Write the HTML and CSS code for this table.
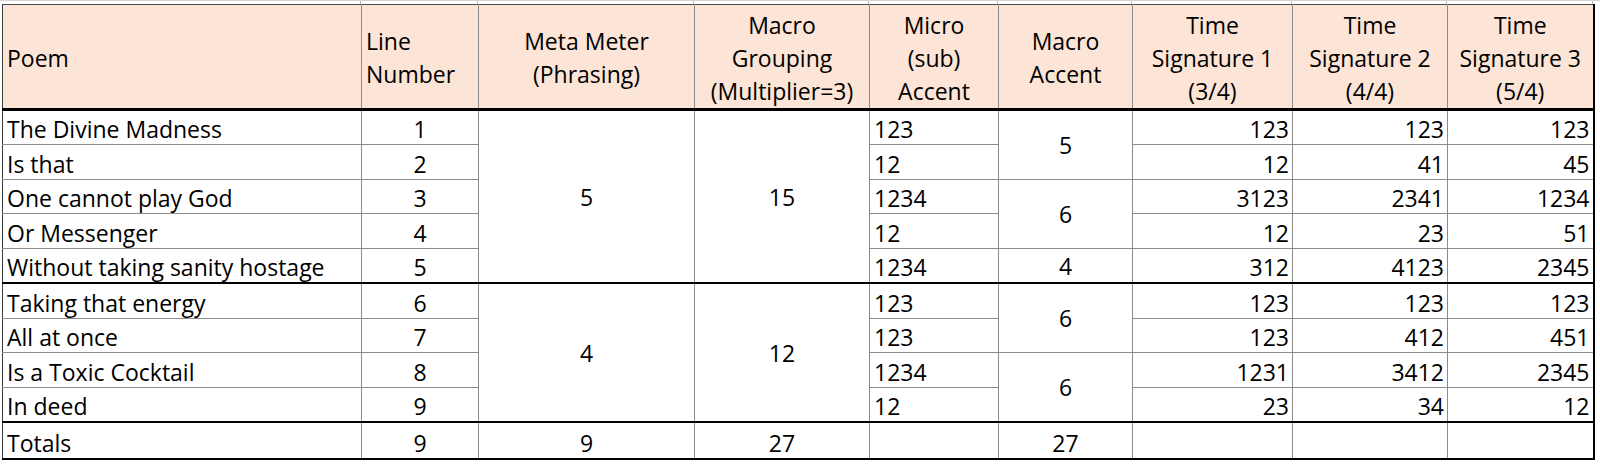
FILE: index.html
```html
<!DOCTYPE html>
<html lang="en">
<head>
<meta charset="utf-8">
<title>Poem meter table</title>
<link rel="stylesheet" href="styles.css">
</head>
<body>
<div class="sheet-wrap">
  <div class="gridstrip">
    <span class="g c-poem"></span><span class="g c-line"></span><span class="g c-meta"></span><span class="g c-group"></span><span class="g c-micro"></span><span class="g c-accent"></span><span class="g c-ts1"></span><span class="g c-ts2"></span><span class="g c-ts3"></span>
  </div>
  <table class="sheet">
    <colgroup>
      <col class="c-poem"><col class="c-line"><col class="c-meta"><col class="c-group"><col class="c-micro"><col class="c-accent"><col class="c-ts1"><col class="c-ts2"><col class="c-ts3">
    </colgroup>
    <thead>
      <tr class="head">
        <th class="left">Poem</th>
        <th class="left">Line<br>Number</th>
        <th>Meta Meter<br>(Phrasing)</th>
        <th>Macro<br>Grouping<br>(Multiplier=3)</th>
        <th>Micro<br>(sub)<br>Accent</th>
        <th>Macro<br>Accent</th>
        <th>Time<br>Signature 1<br>(3/4)</th>
        <th>Time<br>Signature 2<br>(4/4)</th>
        <th class="last">Time<br>Signature 3<br>(5/4)</th>
      </tr>
    </thead>
    <tbody class="group">
      <tr>
        <td class="left">The Divine Madness</td><td class="center">1</td>
        <td class="merge" rowspan="5">5</td><td class="merge" rowspan="5">15</td>
        <td class="left">123</td><td class="merge" rowspan="2">5</td>
        <td class="num">123</td><td class="num">123</td><td class="num last">123</td>
      </tr>
      <tr>
        <td class="left">Is that</td><td class="center">2</td>
        <td class="left">12</td>
        <td class="num">12</td><td class="num">41</td><td class="num last">45</td>
      </tr>
      <tr>
        <td class="left">One cannot play God</td><td class="center">3</td>
        <td class="left">1234</td><td class="merge" rowspan="2">6</td>
        <td class="num">3123</td><td class="num">2341</td><td class="num last">1234</td>
      </tr>
      <tr>
        <td class="left">Or Messenger</td><td class="center">4</td>
        <td class="left">12</td>
        <td class="num">12</td><td class="num">23</td><td class="num last">51</td>
      </tr>
      <tr>
        <td class="left">Without taking sanity hostage</td><td class="center">5</td>
        <td class="left">1234</td><td class="merge">4</td>
        <td class="num">312</td><td class="num">4123</td><td class="num last">2345</td>
      </tr>
    </tbody>
    <tbody class="group">
      <tr>
        <td class="left">Taking that energy</td><td class="center">6</td>
        <td class="merge" rowspan="4">4</td><td class="merge" rowspan="4">12</td>
        <td class="left">123</td><td class="merge" rowspan="2">6</td>
        <td class="num">123</td><td class="num">123</td><td class="num last">123</td>
      </tr>
      <tr>
        <td class="left">All at once</td><td class="center">7</td>
        <td class="left">123</td>
        <td class="num">123</td><td class="num">412</td><td class="num last">451</td>
      </tr>
      <tr>
        <td class="left">Is a Toxic Cocktail</td><td class="center">8</td>
        <td class="left">1234</td><td class="merge" rowspan="2">6</td>
        <td class="num">1231</td><td class="num">3412</td><td class="num last">2345</td>
      </tr>
      <tr>
        <td class="left">In deed</td><td class="center">9</td>
        <td class="left">12</td>
        <td class="num">23</td><td class="num">34</td><td class="num last">12</td>
      </tr>
    </tbody>
    <tfoot>
      <tr class="totals">
        <td class="left">Totals</td><td class="center">9</td><td class="center">9</td><td class="center">27</td>
        <td></td><td class="center">27</td><td></td><td></td><td class="last"></td>
      </tr>
    </tfoot>
  </table>
</div>
</body>
</html>
```

FILE: styles.css
```css
html, body {
  margin: 0;
  padding: 0;
  background: #ffffff;
}

.sheet-wrap {
  padding: 0 0 0 2px;
  width: 1598px;
}

.gridstrip {
  display: flex;
  height: 4px;
  box-sizing: border-box;
  border-top: 1px solid #d4d4d4;
  margin-left: -2px;
  padding-left: 2px;
}

.gridstrip .g {
  display: block;
  box-sizing: border-box;
  border-right: 1px solid #bfbfbf;
  height: 3px;
}

.c-poem { width: 359px; }
.c-line { width: 117px; }
.c-meta { width: 216px; }
.c-group { width: 175px; }
.c-micro { width: 129px; }
.c-accent { width: 134px; }
.c-ts1 { width: 160px; }
.c-ts2 { width: 155px; }
.c-ts3 { width: 146px; }

.sheet {
  border-collapse: collapse;
  table-layout: fixed;
  width: 1591px;
  font-family: "Open Sans", "Noto Sans", sans-serif;
  font-size: 23px;
  color: #000000;
}

.sheet th,
.sheet td {
  border: 1px solid #8c8c8c;
  padding: 0 4px;
  overflow: hidden;
  white-space: nowrap;
}

.sheet th {
  background: #fce4d6;
  font-weight: normal;
  text-align: center;
  vertical-align: middle;
  line-height: 33px;
  border-top: 1px solid #4a4a4a;
  border-bottom: 3px solid #000000;
  padding-top: 3px;
}

.head {
  height: 105px;
}

.sheet tbody tr {
  height: 34.75px;
}

.sheet tfoot tr {
  height: 37px;
}

.sheet td {
  line-height: 30px;
  vertical-align: bottom;
  padding-bottom: 0;
}

.sheet .left { text-align: left; }
.sheet .center { text-align: center; }
.sheet .num { text-align: right; padding-right: 3px; }
.sheet .merge { text-align: center; vertical-align: middle; }

.sheet tr > :first-child {
  border-left: 1px solid #3a3a3a;
}

.sheet .last {
  border-right: 2px solid #000000;
}

.group + .group tr:first-child td {
  border-top: 2px solid #000000;
}

.totals td {
  border-top: 2px solid #000000;
  border-bottom: 2px solid #000000;
}
```
